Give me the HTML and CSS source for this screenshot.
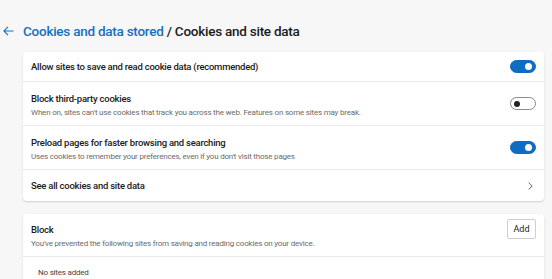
FILE: index.html
```html
<!DOCTYPE html>
<html>
<head>
    <title>Cookies and site data</title>
    <meta charset="UTF-8">
    <link rel="stylesheet" href="styles.css">
</head>
<body>
    <div class="page">
        <div class="header">
            <span class="back">
                <svg width="11" height="10" viewBox="0 0 11 10"><path d="M10.5 5H1M5 0.8L0.9 5L5 9.2" fill="none" stroke="#1470c4" stroke-width="1.1"/></svg>
            </span>
            <h1 class="title"><span class="crumb">Cookies and data stored</span> / Cookies and site data</h1>
        </div>

        <div class="card">
            <div class="row row-short">
                <div class="row-info">
                    <div class="row-title">Allow sites to save and read cookie data (recommended)</div>
                </div>
                <span class="toggle on"></span>
            </div>
            <div class="row">
                <div class="row-info">
                    <div class="row-title">Block third-party cookies</div>
                    <div class="row-desc">When on, sites can't use cookies that track you across the web. Features on some sites may break.</div>
                </div>
                <span class="toggle"></span>
            </div>
            <div class="row">
                <div class="row-info">
                    <div class="row-title">Preload pages for faster browsing and searching</div>
                    <div class="row-desc">Uses cookies to remember your preferences, even if you don't visit those pages</div>
                </div>
                <span class="toggle on"></span>
            </div>
            <div class="row row-link">
                <div class="row-info">
                    <div class="row-title">See all cookies and site data</div>
                </div>
                <svg class="chevron" width="5" height="8" viewBox="0 0 5 8"><path d="M0.6 0.5L4.2 4L0.6 7.5" fill="none" stroke="#555" stroke-width="0.9"/></svg>
            </div>
        </div>

        <div class="card">
            <div class="row row-block">
                <div class="row-info">
                    <div class="row-title">Block</div>
                    <div class="row-desc">You've prevented the following sites from saving and reading cookies on your device.</div>
                </div>
                <button class="add-btn">Add</button>
            </div>
            <div class="empty">No sites added</div>
        </div>
    </div>
</body>
</html>
```

FILE: styles.css
```css
body {
    margin: 0;
    background-color: #f7f7f7;
    font-family: Roboto, "Open Sans", Arial, sans-serif;
    color: #1b1b1b;
}

.page {
    padding: 0 8px 0 3px;
}

.header {
    display: flex;
    align-items: center;
    box-sizing: border-box;
    height: 52px;
    padding-top: 10px;
    gap: 9px;
}

.back {
    display: flex;
    width: 11px;
}

.title {
    margin: 0;
    font-size: 13.5px;
    font-weight: 500;
    letter-spacing: -0.25px;
    color: #1b1b1b;
}

.crumb {
    color: #1470c4;
}

.card {
    margin-left: 20px;
    background-color: #fff;
    border-radius: 4px;
    box-shadow: 0 1px 2px rgba(0, 0, 0, 0.16);
    margin-bottom: 13px;
}

.row {
    display: flex;
    align-items: center;
    justify-content: space-between;
    height: 43px;
    padding: 0 8px;
    border-bottom: 1px solid #ebebeb;
}

.row .row-info {
    padding-top: 2px;
}

.row-short {
    height: 29px;
}

.row-short .row-info,
.row-link .row-info {
    padding-top: 0;
}

.row-link {
    height: 31px;
    border-bottom: none;
}

.row-block {
    height: 42px;
    align-items: flex-start;
}

.row-block .row-info {
    padding-top: 10px;
}

.row-title {
    font-size: 9.5px;
    font-weight: 500;
    letter-spacing: -0.25px;
    color: #1b1b1b;
}

.row-desc {
    font-size: 8px;
    letter-spacing: -0.2px;
    color: #6b6b6b;
    margin-top: 4px;
}

.toggle {
    position: relative;
    flex: none;
    width: 24px;
    height: 11px;
    border-radius: 7px;
    border: 1px solid #8a8a8a;
    background-color: #fff;
}

.toggle::after {
    content: "";
    position: absolute;
    top: 2.5px;
    left: 3px;
    width: 6px;
    height: 6px;
    border-radius: 50%;
    background-color: #222;
}

.toggle.on {
    border-color: #0f6cc2;
    background-color: #0f6cc2;
}

.toggle.on::after {
    left: auto;
    right: 3px;
    top: 2px;
    width: 7px;
    height: 7px;
    background-color: #fff;
}

.chevron {
    flex: none;
    margin-right: 3px;
}

.add-btn {
    margin-top: 5px;
    width: 29px;
    height: 20px;
    padding: 0;
    border: 1px solid #cfcfcf;
    border-radius: 2px;
    background-color: #fff;
    font-family: inherit;
    font-size: 9px;
    color: #1b1b1b;
}

.empty {
    padding: 11px 15px;
    font-size: 8px;
    letter-spacing: -0.2px;
    color: #444;
}
```
